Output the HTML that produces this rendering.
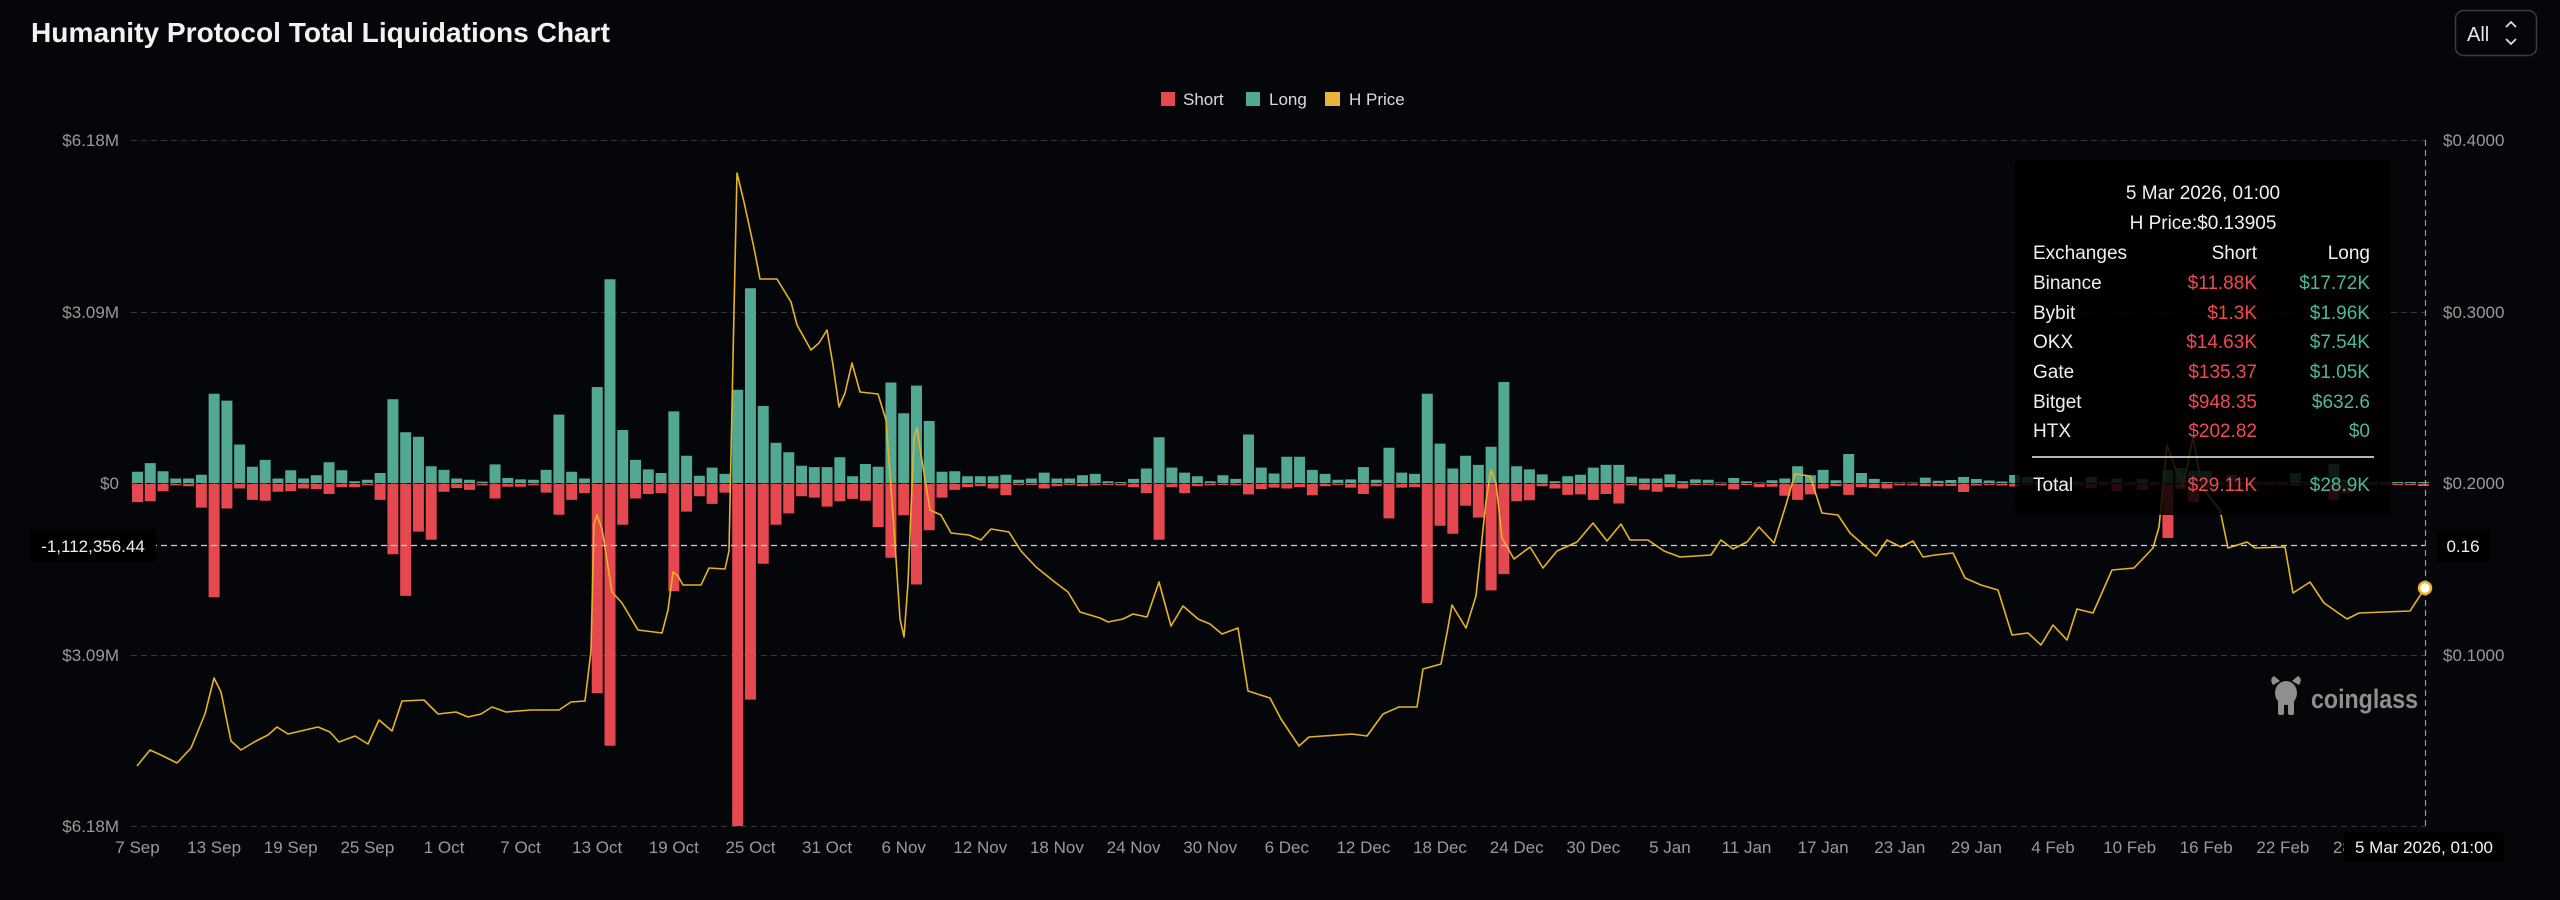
<!DOCTYPE html>
<html><head><meta charset="utf-8"><style>
html,body{margin:0;padding:0;background:#05060a;}
svg{display:block;font-family:"Liberation Sans",sans-serif;}
</style></head><body>
<svg width="2560" height="900" viewBox="0 0 2560 900" xmlns="http://www.w3.org/2000/svg">
<rect width="2560" height="900" fill="#05060a"/>
<text x="31" y="42" font-size="28" font-weight="bold" fill="#f2f2f2" textLength="579" lengthAdjust="spacingAndGlyphs">Humanity Protocol Total Liquidations Chart</text>
<rect x="2455.5" y="10.5" width="81" height="45" rx="8" fill="none" stroke="#3a3c42" stroke-width="1.5"/>
<text x="2467" y="41" font-size="20" fill="#e8e8e8">All</text>
<path d="M2506 27 l5 -5 l5 5 M2506 39 l5 5 l5 -5" fill="none" stroke="#ddd" stroke-width="1.8"/>
<rect x="1161" y="92" width="14" height="14" fill="#e5484e"/>
<text x="1183" y="105" font-size="17" fill="#dcdcdc">Short</text>
<rect x="1246" y="92" width="14" height="14" fill="#52a893"/>
<text x="1269" y="105" font-size="17" fill="#dcdcdc">Long</text>
<rect x="1325" y="92" width="15" height="14" fill="#e8b43a"/>
<text x="1349" y="105" font-size="17" fill="#dcdcdc">H Price</text>
<g stroke="#34363b" stroke-width="1" stroke-dasharray="6 4">
<line x1="131" y1="140.5" x2="2425" y2="140.5"/>
<line x1="131" y1="312.5" x2="2425" y2="312.5"/>
<line x1="131" y1="483.5" x2="2425" y2="483.5"/>
<line x1="131" y1="655.5" x2="2425" y2="655.5"/>
<line x1="131" y1="826.5" x2="2425" y2="826.5"/>
</g>
<g font-size="17" fill="#9a9a9a" text-anchor="end">
<text x="119" y="146">$6.18M</text>
<text x="119" y="318">$3.09M</text>
<text x="119" y="489">$0</text>
<text x="119" y="661">$3.09M</text>
<text x="119" y="832">$6.18M</text>
</g>
<g font-size="17" fill="#9a9a9a">
<text x="2443" y="146">$0.4000</text>
<text x="2443" y="318">$0.3000</text>
<text x="2443" y="489">$0.2000</text>
<text x="2443" y="661">$0.1000</text>
</g>
<path fill="#52a893" d="M132 483 v-11.3h11v11.3m1.77 0 v-19.9h11v19.9m1.77 0 v-11.8h11v11.8m1.77 0 v-4.5h11v4.5m1.77 0 v-4.5h11v4.5m1.77 0 v-8.2h11v8.2m1.77 0 v-89.2h11v89.2m1.77 0 v-82.4h11v82.4m1.77 0 v-38.5h11v38.5m1.77 0 v-16.3h11v16.3m1.77 0 v-23.1h11v23.1m1.77 0 v-4.5h11v4.5m1.77 0 v-12.7h11v12.7m1.77 0 v-4.5h11v4.5m1.77 0 v-7.7h11v7.7m1.77 0 v-20.8h11v20.8m1.77 0 v-12.7h11v12.7m1.77 0 v-1.8h11v1.8m1.77 0 v-3.2h11v3.2m1.77 0 v-10h11v10m1.77 0 v-83.8h11v83.8m1.77 0 v-50.7h11v50.7m1.77 0 v-46.2h11v46.2m1.77 0 v-16.8h11v16.8m1.77 0 v-13.1h11v13.1m1.77 0 v-4.5h11v4.5m1.77 0 v-3.2h11v3.2m1.77 0 v-1.4h11v1.4m1.77 0 v-18.6h11v18.6m1.77 0 v-5h11v5m1.77 0 v-3.6h11v3.6m1.77 0 v-3.2h11v3.2m1.77 0 v-13.1h11v13.1m1.77 0 v-68.4h11v68.4m1.77 0 v-11.3h11v11.3m1.77 0 v-4.5h11v4.5m1.77 0 v-96h11v96m1.77 0 v-203.8h11v203.8m1.77 0 v-53h11v53m1.77 0 v-23.1h11v23.1m1.77 0 v-13.6h11v13.6m1.77 0 v-10h11v10m1.77 0 v-71.6h11v71.6m1.77 0 v-27.2h11v27.2m1.77 0 v-7.2h11v7.2m1.77 0 v-15.4h11v15.4m1.77 0 v-9.1h11v9.1m1.77 0 v-93.3h11v93.3m1.77 0 v-194.7h11v194.7m1.77 0 v-77h11v77m1.77 0 v-40.3h11v40.3m1.77 0 v-30.8h11v30.8m1.77 0 v-17.2h11v17.2m1.77 0 v-15.9h11v15.9m1.77 0 v-15.9h11v15.9m1.77 0 v-25.8h11v25.8m1.77 0 v-6.8h11v6.8m1.77 0 v-19h11v19m1.77 0 v-16.3h11v16.3m1.77 0 v-100.5h11v100.5m1.77 0 v-69.7h11v69.7m1.77 0 v-97.4h11v97.4m1.77 0 v-62h11v62m1.77 0 v-11.3h11v11.3m1.77 0 v-11.8h11v11.8m1.77 0 v-6.8h11v6.8m1.77 0 v-6.8h11v6.8m1.77 0 v-6.8h11v6.8m1.77 0 v-8.2h11v8.2m1.77 0 v-3.2h11v3.2m1.77 0 v-4.5h11v4.5m1.77 0 v-10.4h11v10.4m1.77 0 v-4.5h11v4.5m1.77 0 v-4.5h11v4.5m1.77 0 v-7.7h11v7.7m1.77 0 v-9.1h11v9.1m1.77 0 v-1.8h11v1.8m1.77 0 v-1h11v1m1.77 0 v-4.1h11v4.1m1.77 0 v-14.5h11v14.5m1.77 0 v-45.7h11v45.7m1.77 0 v-15.4h11v15.4m1.77 0 v-10.4h11v10.4m1.77 0 v-6.8h11v6.8m1.77 0 v-1.8h11v1.8m1.77 0 v-7.7h11v7.7m1.77 0 v-4.1h11v4.1m1.77 0 v-48.5h11v48.5m1.77 0 v-15.4h11v15.4m1.77 0 v-9.5h11v9.5m1.77 0 v-26.3h11v26.3m1.77 0 v-26.3h11v26.3m1.77 0 v-13.1h11v13.1m1.77 0 v-9.1h11v9.1m1.77 0 v-3.2h11v3.2m1.77 0 v-3.6h11v3.6m1.77 0 v-15.9h11v15.9m1.77 0 v-3.2h11v3.2m1.77 0 v-35.3h11v35.3m1.77 0 v-10.4h11v10.4m1.77 0 v-9.1h11v9.1m1.77 0 v-89.2h11v89.2m1.77 0 v-39.4h11v39.4m1.77 0 v-14.5h11v14.5m1.77 0 v-27.2h11v27.2m1.77 0 v-18.1h11v18.1m1.77 0 v-36.2h11v36.2m1.77 0 v-101h11v101m1.77 0 v-16.8h11v16.8m1.77 0 v-13.6h11v13.6m1.77 0 v-8.6h11v8.6m1.77 0 v-1.8h11v1.8m1.77 0 v-6.8h11v6.8m1.77 0 v-8.2h11v8.2m1.77 0 v-15.4h11v15.4m1.77 0 v-18.1h11v18.1m1.77 0 v-18.1h11v18.1m1.77 0 v-6.3h11v6.3m1.77 0 v-4.5h11v4.5m1.77 0 v-4.5h11v4.5m1.77 0 v-8.6h11v8.6m1.77 0 v-1.8h11v1.8m1.77 0 v-3.6h11v3.6m1.77 0 v-3.2h11v3.2m1.77 0 v-0.5h11v0.5m1.77 0 v-5h11v5m1.77 0 v-1.8h11v1.8m1.77 0 v-0.5h11v0.5m1.77 0 v-2.7h11v2.7m1.77 0 v-4.5h11v4.5m1.77 0 v-16.8h11v16.8m1.77 0 v-7.7h11v7.7m1.77 0 v-13.1h11v13.1m1.77 0 v-2.7h11v2.7m1.77 0 v-29h11v29m1.77 0 v-10h11v10m1.77 0 v-4.1h11v4.1m1.77 0 v-1h11v1m1.77 0 v-0.5h11v0.5m1.77 0 v-0.5h11v0.5m1.77 0 v-5.4h11v5.4m1.77 0 v-2.3h11v2.3m1.77 0 v-3h11v3m1.77 0 v-6h11v6m1.77 0 v-4h11v4m1.77 0 v-2.5h11v2.5m1.77 0 v-1.5h11v1.5m1.77 0 v-8h11v8m1.77 0 v-6h11v6m1.77 0 v-1.5h11v1.5m1.77 0 v-1h11v1m1.77 0 v-1h11v1m1.77 0 v-1h11v1m1.77 0 v-6h11v6m1.77 0 v-1h11v1m1.77 0 v-4.5h11v4.5m1.77 0 v-1h11v1m1.77 0 v-4h11v4m1.77 0 v-1h11v1m1.77 0 v-13h11v13m1.77 0 v-15h11v15m1.77 0 v-12h11v12m1.77 0 v-12h11v12m1.77 0 v-1h11v1m1.77 0 v-8h11v8m1.77 0 v-1h11v1m1.77 0 v-1h11v1m1.77 0 v-1h11v1m1.77 0 v-1h11v1m1.77 0 v-10h11v10m1.77 0 v-1h11v1m1.77 0 v-1h11v1m1.77 0 v-19h11v19m1.77 0 v-3h11v3m1.77 0 v-1h11v1m1.77 0 v-1h11v1m1.77 0 v-1h11v1m1.77 0 v-1h11v1m1.77 0 v-1h11v1m1.77 0 v-1h11v1z"/>
<path fill="#e5484e" d="M132 484 v18.1h11v-18.1m1.77 0 v17.2h11v-17.2m1.77 0 v7.2h11v-7.2m1.77 0 v1.4h11v-1.4m1.77 0 v2.3h11v-2.3m1.77 0 v23.6h11v-23.6m1.77 0 v113.2h11v-113.2m1.77 0 v24.5h11v-24.5m1.77 0 v4.5h11v-4.5m1.77 0 v15.9h11v-15.9m1.77 0 v16.8h11v-16.8m1.77 0 v7.7h11v-7.7m1.77 0 v7.2h11v-7.2m1.77 0 v4.5h11v-4.5m1.77 0 v5h11v-5m1.77 0 v10h11v-10m1.77 0 v3.2h11v-3.2m1.77 0 v3.2h11v-3.2m1.77 0 v1.4h11v-1.4m1.77 0 v15.9h11v-15.9m1.77 0 v70.2h11v-70.2m1.77 0 v111.9h11v-111.9m1.77 0 v47.6h11v-47.6m1.77 0 v55.7h11v-55.7m1.77 0 v7.7h11v-7.7m1.77 0 v4.1h11v-4.1m1.77 0 v5.9h11v-5.9m1.77 0 v1.4h11v-1.4m1.77 0 v14.5h11v-14.5m1.77 0 v2.7h11v-2.7m1.77 0 v2.7h11v-2.7m1.77 0 v1.4h11v-1.4m1.77 0 v8.6h11v-8.6m1.77 0 v30.8h11v-30.8m1.77 0 v15.9h11v-15.9m1.77 0 v9.1h11v-9.1m1.77 0 v209.2h11v-209.2m1.77 0 v261.8h11v-261.8m1.77 0 v40.8h11v-40.8m1.77 0 v14.5h11v-14.5m1.77 0 v10h11v-10m1.77 0 v9.1h11v-9.1m1.77 0 v107.3h11v-107.3m1.77 0 v27.6h11v-27.6m1.77 0 v12.2h11v-12.2m1.77 0 v19.9h11v-19.9m1.77 0 v8.6h11v-8.6m1.77 0 v342h11v-342m1.77 0 v215.6h11v-215.6m1.77 0 v79.7h11v-79.7m1.77 0 v40.8h11v-40.8m1.77 0 v29.4h11v-29.4m1.77 0 v12.2h11v-12.2m1.77 0 v13.6h11v-13.6m1.77 0 v22.6h11v-22.6m1.77 0 v17.2h11v-17.2m1.77 0 v14.9h11v-14.9m1.77 0 v16.8h11v-16.8m1.77 0 v43h11v-43m1.77 0 v73.8h11v-73.8m1.77 0 v31.3h11v-31.3m1.77 0 v100.5h11v-100.5m1.77 0 v46.2h11v-46.2m1.77 0 v13.6h11v-13.6m1.77 0 v5.9h11v-5.9m1.77 0 v3.2h11v-3.2m1.77 0 v2.3h11v-2.3m1.77 0 v4.5h11v-4.5m1.77 0 v11.3h11v-11.3m1.77 0 v1h11v-1m1.77 0 v1h11v-1m1.77 0 v4.5h11v-4.5m1.77 0 v2.3h11v-2.3m1.77 0 v1h11v-1m1.77 0 v2.3h11v-2.3m1.77 0 v1.4h11v-1.4m1.77 0 v1h11v-1m1.77 0 v1.4h11v-1.4m1.77 0 v3.2h11v-3.2m1.77 0 v9.1h11v-9.1m1.77 0 v55.7h11v-55.7m1.77 0 v3.2h11v-3.2m1.77 0 v9.1h11v-9.1m1.77 0 v2.3h11v-2.3m1.77 0 v1.4h11v-1.4m1.77 0 v1h11v-1m1.77 0 v1.4h11v-1.4m1.77 0 v10.4h11v-10.4m1.77 0 v5h11v-5m1.77 0 v3.6h11v-3.6m1.77 0 v4.5h11v-4.5m1.77 0 v3.2h11v-3.2m1.77 0 v11.3h11v-11.3m1.77 0 v2.3h11v-2.3m1.77 0 v1h11v-1m1.77 0 v3.6h11v-3.6m1.77 0 v10h11v-10m1.77 0 v2.3h11v-2.3m1.77 0 v34.4h11v-34.4m1.77 0 v3.6h11v-3.6m1.77 0 v3.2h11v-3.2m1.77 0 v119.1h11v-119.1m1.77 0 v41.7h11v-41.7m1.77 0 v49.8h11v-49.8m1.77 0 v21.7h11v-21.7m1.77 0 v33.5h11v-33.5m1.77 0 v106.4h11v-106.4m1.77 0 v90.1h11v-90.1m1.77 0 v17.2h11v-17.2m1.77 0 v16.3h11v-16.3m1.77 0 v2.3h11v-2.3m1.77 0 v4.5h11v-4.5m1.77 0 v10.9h11v-10.9m1.77 0 v10.4h11v-10.4m1.77 0 v15.9h11v-15.9m1.77 0 v10h11v-10m1.77 0 v19.5h11v-19.5m1.77 0 v1.4h11v-1.4m1.77 0 v5.9h11v-5.9m1.77 0 v7.7h11v-7.7m1.77 0 v3.2h11v-3.2m1.77 0 v4.5h11v-4.5m1.77 0 v1h11v-1m1.77 0 v1h11v-1m1.77 0 v1.4h11v-1.4m1.77 0 v5.4h11v-5.4m1.77 0 v1h11v-1m1.77 0 v3.2h11v-3.2m1.77 0 v2.7h11v-2.7m1.77 0 v11.8h11v-11.8m1.77 0 v15.9h11v-15.9m1.77 0 v10.4h11v-10.4m1.77 0 v4.5h11v-4.5m1.77 0 v2.3h11v-2.3m1.77 0 v10.9h11v-10.9m1.77 0 v3.2h11v-3.2m1.77 0 v4.1h11v-4.1m1.77 0 v4.5h11v-4.5m1.77 0 v1.4h11v-1.4m1.77 0 v1.4h11v-1.4m1.77 0 v2.3h11v-2.3m1.77 0 v2.3h11v-2.3m1.77 0 v2h11v-2m1.77 0 v8h11v-8m1.77 0 v1.5h11v-1.5m1.77 0 v1h11v-1m1.77 0 v1.5h11v-1.5m1.77 0 v2.5h11v-2.5m1.77 0 v1h11v-1m1.77 0 v1h11v-1m1.77 0 v2h11v-2m1.77 0 v1h11v-1m1.77 0 v1h11v-1m1.77 0 v4h11v-4m1.77 0 v1h11v-1m1.77 0 v7h11v-7m1.77 0 v1h11v-1m1.77 0 v6h11v-6m1.77 0 v1h11v-1m1.77 0 v54h11v-54m1.77 0 v5h11v-5m1.77 0 v18h11v-18m1.77 0 v4h11v-4m1.77 0 v1h11v-1m1.77 0 v3h11v-3m1.77 0 v1h11v-1m1.77 0 v1h11v-1m1.77 0 v1h11v-1m1.77 0 v1h11v-1m1.77 0 v1.6h11v-1.6m1.77 0 v1h11v-1m1.77 0 v1h11v-1m1.77 0 v16h11v-16m1.77 0 v9h11v-9m1.77 0 v1h11v-1m1.77 0 v1h11v-1m1.77 0 v1h11v-1m1.77 0 v1h11v-1m1.77 0 v1h11v-1m1.77 0 v2h11v-2z"/>
<polyline fill="none" stroke="#e6b325" stroke-width="1.6" stroke-linejoin="round" points="137,766 150,750 163,756 177,763 191,748 205,714 214,678 221,692 231,741 241,750 256,741 268,735 277,727 288,734 318,727 330,732 339,742 355,736 368,744 379,720 392,731 402,701 424,700 438,714 456,712 468,717 481,714 492,707 506,712 531,710 559,710 571,702 585,701 591,651 594,524 597,515 602,529 612,592 622,603 638,630 662,633 668,610 673,572 678,576 683,585 701,585 709,568 725,569 729,551 734,311 737,173 744,202 754,248 760,279 777,279 791,302 797,325 811,350 819,343 827,330 833,365 839,407 845,393 852,363 860,392 878,394 886,420 894,529 900,619 904,637 908,583 914,438 917,428 922,461 930,510 941,515 951,533 969,535 981,540 991,529 1009,532 1021,551 1036,567 1056,583 1068,592 1080,612 1100,618 1108,622 1123,619 1133,614 1147,617 1159,582 1171,626 1183,606 1198,619 1210,624 1222,634 1238,628 1248,691 1270,698 1281,719 1299,746 1309,737 1352,734 1367,736 1383,714 1399,707 1417,707 1423,669 1441,664 1447,633 1452,605 1466,628 1476,596 1486,501 1491,470 1496,483 1502,538 1514,559 1530,547 1543,568 1557,551 1577,542 1593,523 1607,541 1621,524 1630,540 1648,540 1664,551 1680,557 1711,555 1721,540 1733,549 1747,542 1759,527 1774,543 1785,508 1795,474 1810,476 1822,513 1838,515 1850,533 1866,547 1876,556 1887,540 1901,547 1913,541 1923,557 1935,555 1953,553 1965,578 1981,585 1998,590 2012,635 2028,633 2041,645 2053,625 2067,640 2077,609 2093,613 2112,570 2134,568 2153,548 2159,527 2167,445 2175,467 2183,487 2193,437 2202,487 2220,510 2228,548 2247,542 2255,548 2285,547 2293,593 2310,582 2324,603 2347,619 2359,613 2410,611 2425,588"/>
<!-- crosshair -->
<line x1="131" y1="545.5" x2="2425" y2="545.5" stroke="#d0d0d0" stroke-width="1.2" stroke-dasharray="6 4"/>
<line x1="2425.5" y1="140" x2="2425.5" y2="826" stroke="#9a9a9a" stroke-width="1.2" stroke-dasharray="6 4"/>
<rect x="30" y="529" width="126" height="33" rx="4" fill="#000"/>
<text x="93" y="552" font-size="17" fill="#f0f0f0" text-anchor="middle">-1,112,356.44</text>
<rect x="2437" y="529" width="53" height="33" rx="4" fill="#000"/>
<text x="2463" y="552" font-size="17" fill="#f0f0f0" text-anchor="middle">0.16</text>
<circle cx="2425" cy="588" r="6" fill="#fff" stroke="#e6b325" stroke-width="2.5"/>
<!-- watermark -->
<g fill="#8f8f8f">
<ellipse cx="2286" cy="693" rx="11" ry="12"/>
<path d="M2273 685 q-4 -6 1 -9 l6 5 z M2299 685 q4 -6 -1 -9 l-6 5 z"/>
<rect x="2278" y="700" width="6" height="15" rx="2"/>
<rect x="2288" y="700" width="6" height="15" rx="2"/>
<text x="2311" y="708" font-size="27" font-weight="bold" textLength="107" lengthAdjust="spacingAndGlyphs">coinglass</text>
</g>
<!-- x labels -->
<g font-size="17" fill="#9a9a9a" text-anchor="middle">
<text x="137.5" y="853">7 Sep</text><text x="214.1" y="853">13 Sep</text><text x="290.7" y="853">19 Sep</text><text x="367.4" y="853">25 Sep</text><text x="444" y="853">1 Oct</text><text x="520.6" y="853">7 Oct</text><text x="597.2" y="853">13 Oct</text><text x="673.8" y="853">19 Oct</text><text x="750.5" y="853">25 Oct</text><text x="827.1" y="853">31 Oct</text><text x="903.7" y="853">6 Nov</text><text x="980.3" y="853">12 Nov</text><text x="1056.9" y="853">18 Nov</text><text x="1133.6" y="853">24 Nov</text><text x="1210.2" y="853">30 Nov</text><text x="1286.8" y="853">6 Dec</text><text x="1363.4" y="853">12 Dec</text><text x="1440" y="853">18 Dec</text><text x="1516.7" y="853">24 Dec</text><text x="1593.3" y="853">30 Dec</text><text x="1669.9" y="853">5 Jan</text><text x="1746.5" y="853">11 Jan</text><text x="1823.1" y="853">17 Jan</text><text x="1899.8" y="853">23 Jan</text><text x="1976.4" y="853">29 Jan</text><text x="2053" y="853">4 Feb</text><text x="2129.6" y="853">10 Feb</text><text x="2206.2" y="853">16 Feb</text><text x="2282.9" y="853">22 Feb</text><text x="2359.5" y="853">28 Feb</text>
</g>
<rect x="2344" y="832" width="160" height="30" rx="4" fill="#000"/>
<text x="2424" y="853" font-size="17" fill="#f4f4f4" text-anchor="middle">5 Mar 2026, 01:00</text>
<!-- tooltip -->
<rect x="2015" y="160" width="376" height="355" rx="6" fill="#000" fill-opacity="0.84"/>
<g font-size="19" fill="#f0f0f0">
<text x="2203" y="199" text-anchor="middle">5 Mar 2026, 01:00</text>
<text x="2203" y="229" text-anchor="middle">H Price:$0.13905</text>
<text x="2033" y="259">Exchanges</text>
<text x="2257" y="259" text-anchor="end">Short</text>
<text x="2370" y="259" text-anchor="end">Long</text>
<text x="2033" y="289">Binance</text>
<text x="2033" y="319">Bybit</text>
<text x="2033" y="348">OKX</text>
<text x="2033" y="378">Gate</text>
<text x="2033" y="408">Bitget</text>
<text x="2033" y="437">HTX</text>
<text x="2033" y="491">Total</text>
</g>
<g font-size="19" fill="#ef4a50" text-anchor="end">
<text x="2257" y="289">$11.88K</text><text x="2257" y="319">$1.3K</text><text x="2257" y="348">$14.63K</text><text x="2257" y="378">$135.37</text><text x="2257" y="408">$948.35</text><text x="2257" y="437">$202.82</text><text x="2257" y="491">$29.11K</text>
</g>
<g font-size="19" fill="#4db89b" text-anchor="end">
<text x="2370" y="289">$17.72K</text><text x="2370" y="319">$1.96K</text><text x="2370" y="348">$7.54K</text><text x="2370" y="378">$1.05K</text><text x="2370" y="408">$632.6</text><text x="2370" y="437">$0</text><text x="2370" y="491">$28.9K</text>
</g>
<line x1="2032" y1="457" x2="2374" y2="457" stroke="#f0f0f0" stroke-width="1.5"/>
</svg>
</body></html>
